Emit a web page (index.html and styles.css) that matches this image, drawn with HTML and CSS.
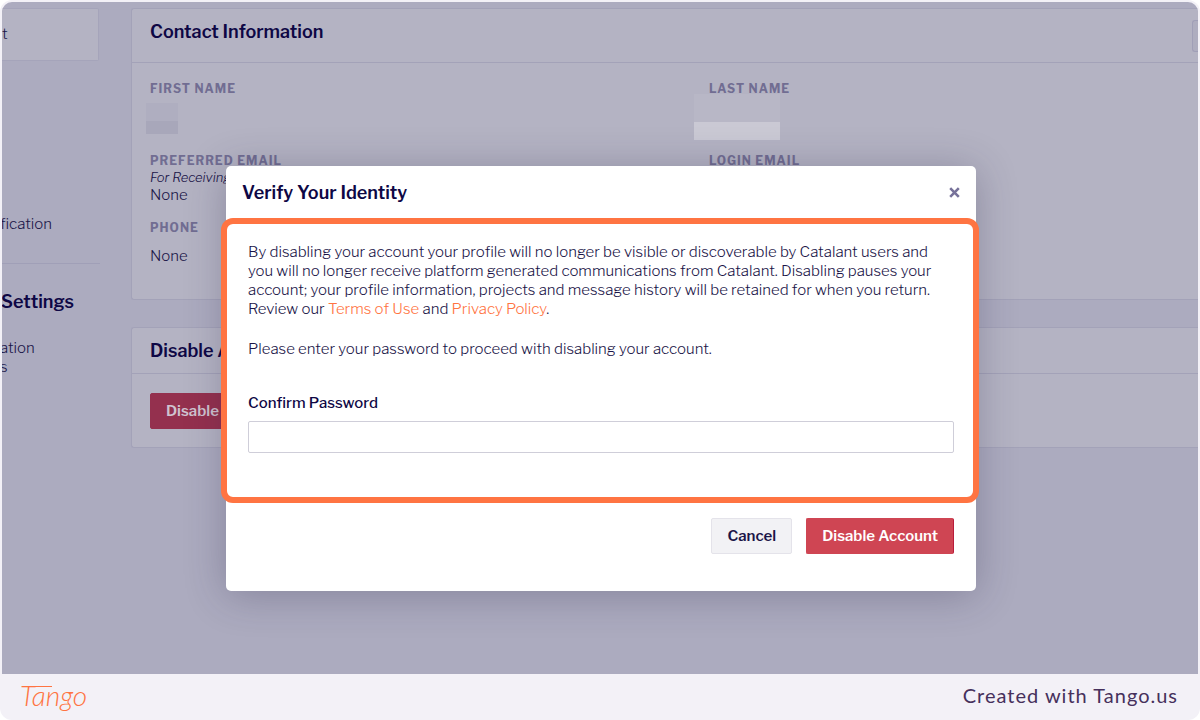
FILE: index.html
```html
<!doctype html>
<html lang="en">

<head>
	<meta charset="utf-8">
	<title>Verify Your Identity</title>
	<link rel="stylesheet" href="styles.css">
</head>

<body>
	<div class="frame">
		<div class="stage">
			<div class="app">
				<nav class="sidebar">
					<a class="tab" href="#">t</a>
					<a class="navLink" href="#">fication</a>
					<h2 class="navTitle">Settings</h2>
					<a class="navLink2" href="#">ation<br>s</a>
				</nav>
				<main class="main">
					<section class="card contact">
						<header class="cardHeader">
							<h2>Contact Information</h2>
							<button class="edit" aria-label="Edit"></button>
						</header>
						<div class="fields">
							<div class="field">
								<h3>First Name</h3>
								<div class="hiddenFirst"></div>
							</div>
							<div class="field">
								<h3>Last Name</h3>
								<div class="hiddenLast"></div>
							</div>
							<div class="field email">
								<h3>Preferred Email</h3>
								<em>For Receiving</em>
								<p>None</p>
							</div>
							<div class="field email">
								<h3>Login Email</h3>
							</div>
							<div class="field phone">
								<h3>Phone</h3>
								<p>None</p>
							</div>
						</div>
					</section>
					<section class="card">
						<header class="cardHeader small">
							<h2>Disable Account</h2>
						</header>
						<div class="cardBody">
							<button class="btn dimmed">Disable Account</button>
						</div>
					</section>
				</main>
			</div>

			<div class="overlay">
				<form class="modal" role="dialog" aria-labelledby="modalTitle">
					<header class="modalHeader">
						<h1 id="modalTitle">Verify Your Identity</h1>
						<button type="button" class="close" aria-label="Close">
							<svg width="11" height="11" viewBox="0 0 11 11">
								<path d="M1.2 1.2L9.8 9.8M9.8 1.2L1.2 9.8" />
							</svg>
						</button>
					</header>
					<div class="modalBody">
						<p>By disabling your account your profile will no longer be visible or discoverable by Catalant users and<br>
							you will no longer receive platform generated communications from Catalant. Disabling pauses your<br>
							account; your profile information, projects and message history will be retained for when you return.<br>
							Review our <a href="#">Terms of Use</a> and <a href="#">Privacy Policy</a>.</p>
						<p>Please enter your password to proceed with disabling your account.</p>
						<label for="password">Confirm Password</label>
						<input type="password" id="password" name="password">
					</div>
					<footer class="modalFooter">
						<button type="button" class="btn cancel">Cancel</button>
						<button type="submit" class="btn danger">Disable Account</button>
					</footer>
				</form>
			</div>
		</div>
		<footer class="credit">
			<a class="logo" href="#">Tango</a>
			<span>Created with Tango.us</span>
		</footer>
	</div>
</body>

</html>
```
FILE: styles.css
```css
* {
	box-sizing: border-box;
}

body {
	margin: 0;
	background: #fff;
	color: #1b1548;
	font: 300 15px/19px 'Libre Franklin', Inter, 'Liberation Sans', sans-serif;
}

h1, h2, h3, p {
	margin: 0;
}

h1, h2 {
	color: #0e0745;
	font-size: 18px;
	line-height: 24px;
	font-weight: 600;
}

a {
	color: inherit;
	text-decoration: none;
}

button, input {
	font: inherit;
}

.frame {
	display: flex;
	flex-direction: column;
	min-height: 100vh;
	padding: 2px 2px 0;
	border-radius: 12px;
	background: #f3f1f7;
}

.stage {
	position: relative;
	flex: 1;
	overflow: hidden;
	border-radius: 10px 10px 0 0;
	background: #acabbf;
}

.app {
	display: flex;
	gap: 31px;
	padding-top: 6px;
}

/* left menu */
.sidebar {
	display: flex;
	flex-direction: column;
	width: 98px;
}

.tab {
	width: 97px;
	padding: 16px 0;
	border: 1px solid #a5a4ba;
	border-left: 0;
	border-radius: 0 2px 2px 0;
	background: #b4b3c3;
}

.navLink {
	margin-top: 154px;
	padding-bottom: 29px;
	border-bottom: 1px solid #a09fb7;
	text-indent: -2px;
}

.navTitle {
	margin: 26px 0 25px -1px;
}

.navLink2 {
	margin-left: -2px;
}

/* cards */
.main {
	flex: 1;
	display: flex;
	flex-direction: column;
	gap: 27px;
}

.card {
	border: 1px solid #a3a2b8;
	border-right: 0;
	border-radius: 3px 0 0 3px;
	background: #b4b3c3;
}

.contact {
	min-height: 292px;
}

.cardHeader {
	display: flex;
	justify-content: space-between;
	height: 54px;
	padding: 11px 0 0 18px;
	border-bottom: 1px solid #a3a2b8;
}

.small {
	height: 46px;
}

.edit {
	width: 6px;
	height: 32px;
	padding: 0;
	border: 1px solid #a09fb7;
	border-right: 0;
	border-radius: 3px 0 0 3px;
	background: #aeadbf;
}

.fields {
	display: grid;
	grid-template-columns: 8fr 7fr;
	padding: 16px 0 0 18px;
}

.field {
	min-height: 72px;
}

.email {
	min-height: 67px;
}

.field h3 {
	color: #716d92;
	font-size: 12px;
	line-height: 20px;
	font-weight: 700;
	letter-spacing: 1px;
	text-transform: uppercase;
}

.field em {
	display: block;
	margin-bottom: 2px;
	font-size: 13px;
	line-height: 13px;
}

.phone p {
	margin-top: 9px;
}

.hiddenFirst {
	width: 32px;
	height: 31px;
	margin: 4px 0 0 -4px;
	background: linear-gradient(#afaec0 18px, #a8a7ba 18px);
}

.hiddenLast {
	width: 86px;
	height: 46px;
	margin: -5px 0 0 -15px;
	background: linear-gradient(#b8b7c6 28px, #cac9d4 28px);
}

.cardBody {
	padding: 19px 18px 18px;
}

.btn {
	height: 36px;
	padding: 0 15px;
	border: 1px solid #e4e3ea;
	border-radius: 2px;
	font-weight: 600;
}

.dimmed {
	border-color: #94304e;
	background: #94304e;
	color: #cfc3d0;
}

/* dialog */
.overlay {
	position: absolute;
	inset: 0;
	display: flex;
	justify-content: center;
	align-items: flex-start;
	padding: 164px 0 0 2px;
}

.modal {
	width: 750px;
	border-radius: 5px;
	background: #fff;
	box-shadow: 0 4px 40px rgba(40, 36, 70, 0.3);
}

.modalHeader {
	display: flex;
	justify-content: space-between;
	align-items: center;
	height: 55px;
	padding: 0 16px 2px;
}

.close {
	display: flex;
	padding: 0;
	border: 0;
	background: none;
}

.close svg {
	fill: none;
	stroke: #77729a;
	stroke-width: 2.6;
}

.modalBody {
	position: relative;
	padding: 22px 22px 48px;
}

/* highlight ring */
.modalBody::after {
	content: '';
	position: absolute;
	inset: -3px -3px -2px -5px;
	border: 6px solid #ff7442;
	border-radius: 12px;
	pointer-events: none;
}

.modalBody p {
	margin-bottom: 21px;
	white-space: nowrap;
}

.modalBody a {
	color: #ff7442;
}

.modalBody label {
	display: block;
	margin: 35px 0 8px;
	color: #0e0745;
	font-weight: 500;
}

.modalBody input {
	display: block;
	width: 100%;
	height: 32px;
	padding: 0 8px;
	border: 1px solid #cfced9;
	border-radius: 2px;
}

.modalFooter {
	display: flex;
	justify-content: flex-end;
	gap: 14px;
	padding: 17px 22px 37px;
}

.cancel {
	background: #f2f2f5;
	color: #1b1548;
}

.danger {
	border-color: #cf4553 #b91c3a #cf4553 #cf4553;
	background: #cf4553;
	color: #fff;
}

/* bottom strip */
.credit {
	display: flex;
	justify-content: space-between;
	align-items: center;
	height: 46px;
	padding: 0 20px 4px 18px;
	color: #46305c;
	font-family: Lato, sans-serif;
	font-size: 20px;
	font-weight: 400;
	letter-spacing: 1px;
}

.logo {
	position: relative;
	color: #ff7442;
	font-size: 28px;
	font-style: italic;
	font-weight: 300;
	letter-spacing: 0;
}

/* long stroke over the T */
.logo::before {
	content: '';
	position: absolute;
	top: 0;
	left: 3px;
	width: 29px;
	height: 1px;
	background: #ff7442;
}
```
